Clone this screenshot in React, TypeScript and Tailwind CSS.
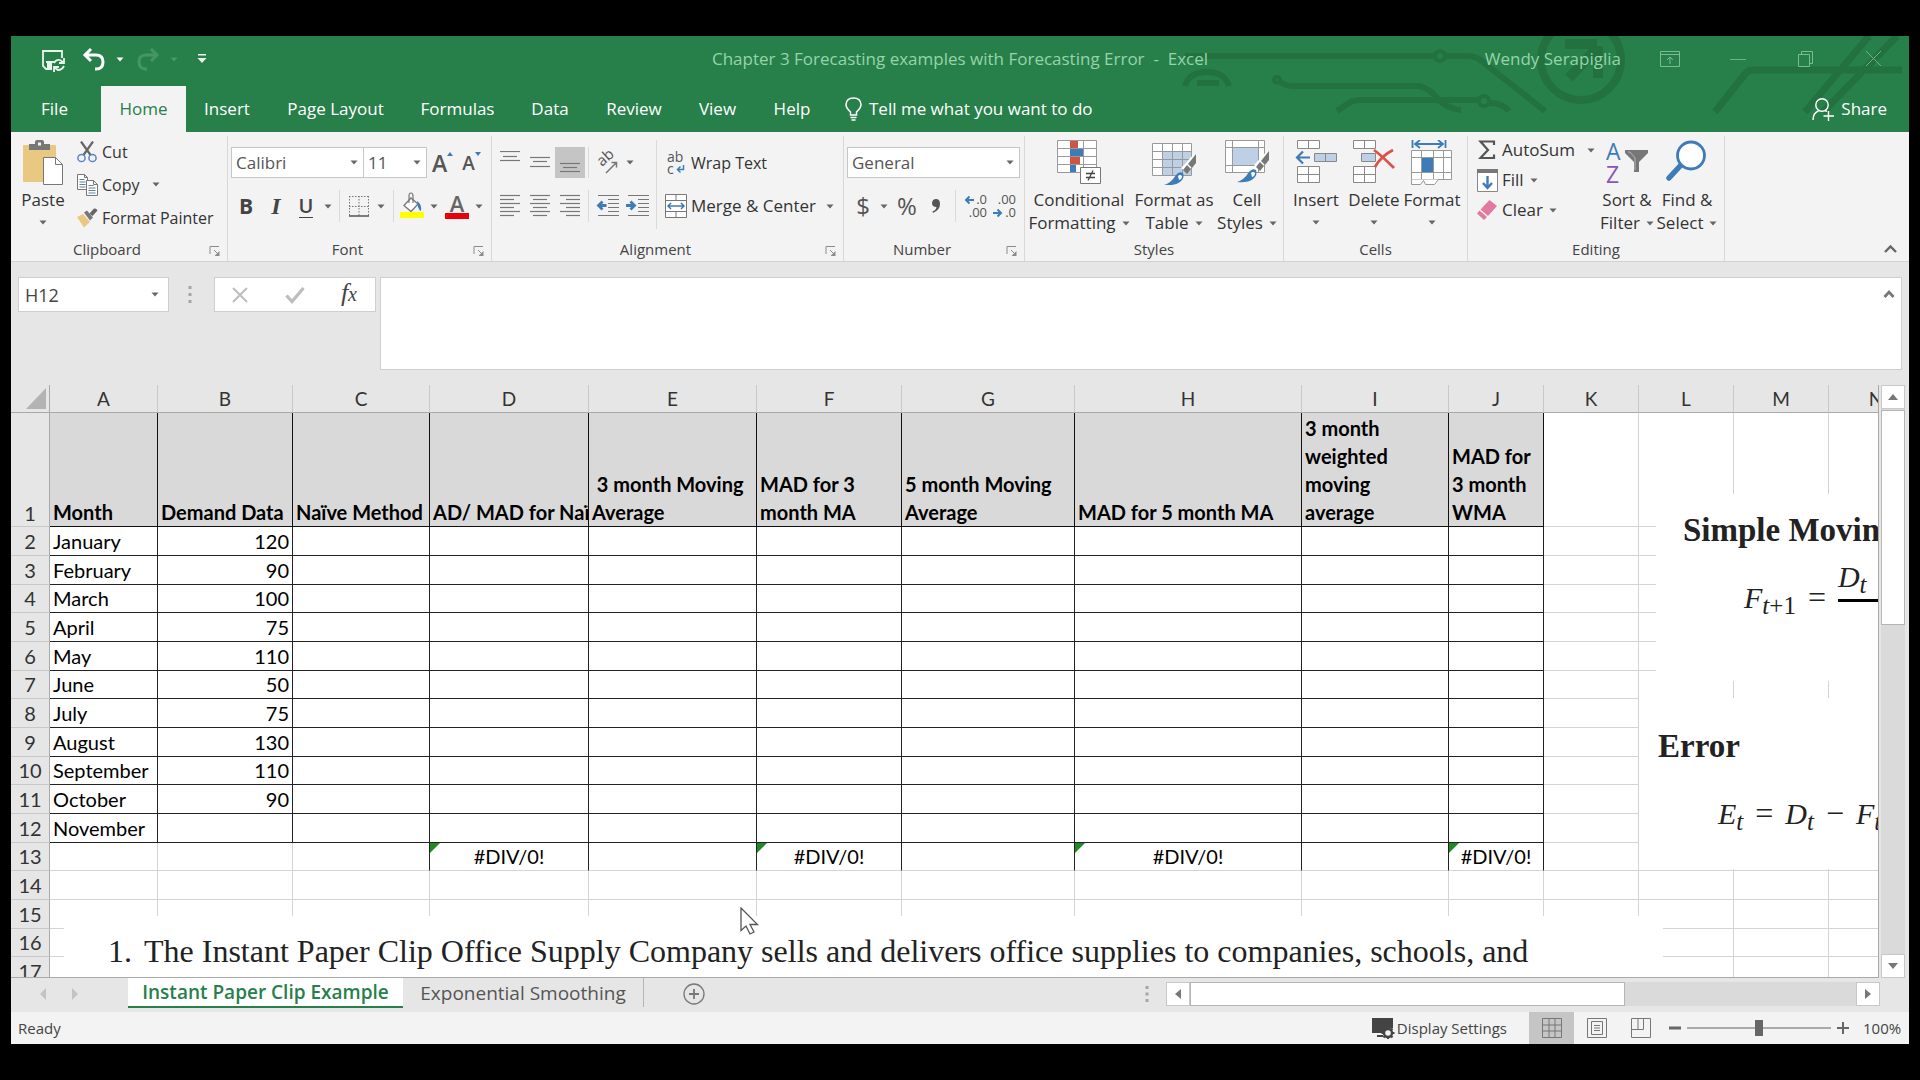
import type { ReactNode } from "react";

const UI = "font-['Open_Sans','Noto_Sans',sans-serif]";
const CELL = "font-['Lato','Open_Sans',sans-serif]";
const MATH = "font-['Liberation_Serif',serif]";

/* ---------- small pieces ---------- */

function Caret({ className = "text-[#666]" }: { className?: string }) {
  return (
    <svg className={`inline-block h-[5px] w-2 shrink-0 ${className}`} viewBox="0 0 8 5" aria-hidden="true">
      <path d="M0.5 0.5h7L4 4.5z" fill="currentColor" />
    </svg>
  );
}

function Launcher() {
  return (
    <button type="button" aria-label="More options" className="absolute right-1.5 top-1.5">
      <svg className="h-3 w-3" viewBox="0 0 12 12" fill="none" stroke="#8a8a8a" aria-hidden="true">
        <path d="M1 9V1.5h9M5 5l4 4" />
        <path d="M10.5 6v5H5.5z" fill="#8a8a8a" stroke="none" />
      </svg>
    </button>
  );
}

function Group({
  label,
  width,
  launcher,
  children,
}: {
  label: string;
  width: string;
  launcher?: boolean;
  children: ReactNode;
}) {
  return (
    <section className={`flex shrink-0 flex-col ${width}`} aria-label={label}>
      <div className="flex">
        <div className="flex h-[107px] min-w-0 flex-1">{children}</div>
        <div className="mt-1 w-px bg-[#d8d8d8]" />
      </div>
      <div
        className={`relative flex h-[22px] items-start justify-center border-r border-[#d8d8d8] text-[15px] leading-5 text-[#444] ${
          launcher ? "pr-6" : ""
        }`}
      >
        {label}
        {launcher && <Launcher />}
      </div>
    </section>
  );
}

function BigButton({
  icon,
  lines,
  width,
}: {
  icon: ReactNode;
  lines: [string, string];
  width: string;
}) {
  return (
    <button type="button" className={`flex shrink-0 flex-col items-center pt-2 ${width}`}>
      <span className="flex h-12 items-start justify-center">{icon}</span>
      <span className="whitespace-nowrap text-[17px] leading-[23px]">{lines[0]}</span>
      <span className={`flex items-center whitespace-nowrap text-[17px] leading-6 ${lines[1] ? "gap-1.5" : ""}`}>
        {lines[1]}
        <span className="flex h-[22px] items-center">
          <Caret />
        </span>
      </span>
    </button>
  );
}

function RowButton({
  icon,
  label,
  caret,
  height = "h-[33px]",
  gap = "gap-1.5",
  size = "text-[17px]",
}: {
  icon: ReactNode;
  label: string;
  caret?: boolean;
  height?: string;
  gap?: string;
  size?: string;
}) {
  return (
    <button type="button" className={`flex items-center gap-1 ${height}`}>
      <span className="flex w-[22px] shrink-0 items-center justify-center">{icon}</span>
      <span className={`flex items-center whitespace-nowrap leading-6 ${size} ${gap}`}>
        {label}
        {caret && <Caret />}
      </span>
    </button>
  );
}

function Tool({
  width,
  label,
  children,
  className = "",
}: {
  width: string;
  label: string;
  children: ReactNode;
  className?: string;
}) {
  return (
    <button
      type="button"
      aria-label={label}
      className={`flex h-full shrink-0 items-center justify-center ${width} ${className}`}
    >
      {children}
    </button>
  );
}

function Divider({ width }: { width: string }) {
  return (
    <span className={`flex h-full shrink-0 justify-center ${width}`}>
      <span className="h-full w-px bg-[#dadada]" />
    </span>
  );
}

/* ---------- icons ---------- */

const PasteIcon = () => (
  <svg className="h-[45px] w-[42px]" viewBox="0 0 42 45" aria-hidden="true">
    <rect x="1" y="5" width="33" height="37" rx="1" fill="#e9c882" />
    <path d="M7 4h6V2q0-2 2-2h5q2 0 2 2v2h6v6H7z" fill="#777" />
    <rect x="16" y="2.5" width="3" height="3" fill="#f3f3f3" />
    <path d="M21.500 17.500h12l7 7v20h-19z" fill="#fff" stroke="#777" />
    <path d="M33.500 17.500v7h7" fill="none" stroke="#777" />
  </svg>
);
const CutIcon = () => (
  <svg className="h-[22px] w-5" viewBox="0 0 20 22" fill="none" aria-hidden="true">
    <path d="M4 0.500 13.500 14M16 0.500 6.500 14" stroke="#666" strokeWidth="2.200" />
    <circle cx="4.500" cy="17" r="3.600" stroke="#5b84c4" strokeWidth="1.500" />
    <circle cx="15.500" cy="17" r="3.600" stroke="#5b84c4" strokeWidth="1.500" />
  </svg>
);
const CopyIcon = () => (
  <svg className="h-[22px] w-[21px]" viewBox="0 0 21 22" fill="#fff" stroke="#777" aria-hidden="true">
    <path d="M.5.5h7l3 3v12H.5zM7.500.5v3h3" />
    <path d="M2.500 5.500h5M2.500 8h6M2.500 10.500h6M2.500 13h6" stroke="#5b7f9c" />
    <path d="M9.500 6.500h7l4 4v11h-11zM16.500 6.500v4h4" />
    <path d="M11.500 11.500h5M11.500 14h7M11.500 16.500h7M11.500 19h7" stroke="#5b7f9c" />
  </svg>
);
const PainterIcon = () => (
  <svg className="h-5 w-[22px]" viewBox="0 0 22 20" aria-hidden="true">
    <path d="M1 9 7 6l7 8-6 5.500z" fill="#e9c882" />
    <path d="m8 4.500 3-2 6 7-3 3z" fill="#777" />
    <path d="M13.500 5.500 18 .5q2.500-.5 3.500 2L16.500 8z" fill="#666" />
  </svg>
);
const AlignIcon = ({ rows }: { rows: Array<[number, number, number]> }) => (
  <svg className="h-6 w-5" viewBox="0 0 20 24" stroke="#777" strokeWidth="1.200" aria-hidden="true">
    {rows.map(([x1, x2, y]) => (
      <path key={y} d={`M${x1} ${y}.5H${x2}`} />
    ))}
  </svg>
);
const IndentIcon = ({ out }: { out?: boolean }) => (
  <svg className="h-6 w-6" viewBox="0 0 24 24" fill="none" stroke="#777" strokeWidth="1.200" aria-hidden="true">
    <path d="M2 1.500h21M12 5.500h11M12 9.500h11M12 13.500h11M12 17.500h11M2 21.500h21" />
    {out ? (
      <path d="M10.500 11.500H3M6.500 7.500l-4 4 4 4" stroke="#3d7cb8" strokeWidth="2.800" />
    ) : (
      <path d="M0 11.500h8M4.500 7.500l4 4-4 4" stroke="#3d7cb8" strokeWidth="2.800" />
    )}
  </svg>
);
const OrientationIcon = () => (
  <svg className="h-5 w-5 overflow-visible" viewBox="0 0 20 20" fill="none" aria-hidden="true">
    <text x="0" y="0" transform="translate(4 14) rotate(-42)" fontSize="15" fill="#555" fontFamily="Open Sans">
      ab
    </text>
    <path d="M8 20 18 10M13.500 9.500H18.500v5" stroke="#777" strokeWidth="1.500" />
  </svg>
);
const WrapIcon = () => (
  <span className="relative block h-6 w-[18px] text-left text-[14px] text-[#555]" aria-hidden="true">
    <span className="block leading-[11px]">ab</span>
    <span className="block leading-[13px]">c</span>
    <svg className="absolute bottom-0 right-0 h-[11px] w-[9px]" viewBox="0 0 9 11" fill="none">
      <path d="M7.500 1v4.500H1.500M4.500 2.500l-3 3 3 3" stroke="#3d7cb8" strokeWidth="1.500" />
    </svg>
  </span>
);
const MergeIcon = () => (
  <svg className="h-6 w-[22px]" viewBox="0 0 22 24" fill="#fff" stroke="#777" aria-hidden="true">
    <path d="M.5.5h21v23H.5zM.5 6.500h21M.5 17.500h21M11 .5v6M11 17.500v6" />
    <path d="M3 12h16M6 9l-3 3 3 3M16 9l3 3-3 3" fill="none" stroke="#3d7cb8" strokeWidth="1.500" />
  </svg>
);
const BordersIcon = () => (
  <svg className="h-[22px] w-[22px]" viewBox="0 0 22 22" fill="none" stroke="#777" aria-hidden="true">
    <path d="M1 1.500h20M1.500 1v20M20.500 1v20M11 1v20M1 11.500h20" strokeDasharray="1.500 1.500" />
    <path d="M1 21h20" strokeWidth="1.500" stroke="#555" />
  </svg>
);
const FillColorIcon = () => (
  <svg className="h-7 w-6" viewBox="0 0 24 28" fill="none" aria-hidden="true">
    <path d="M11 6 4 13.500l7 6L18 12z" fill="#fff" stroke="#777" strokeWidth="1.300" />
    <path d="M9 11V4q0-3 2-3t2 3v7" stroke="#777" strokeWidth="1.200" />
    <path d="M17 9q5 3 4 10-2-1-3-4z" fill="#3d7cb8" />
    <rect x="0" y="20" width="24" height="6" fill="#ff0" />
  </svg>
);
const DecimalIcon = ({ less }: { less?: boolean }) => (
  <span className="relative block h-[26px] w-6 text-right text-[13px] text-[#555]" aria-hidden="true">
    <span className="block leading-[13px]">{less ? ".00" : ".0"}</span>
    <span className="block leading-[13px]">{less ? ".0" : ".00"}</span>
    <svg className="absolute inset-0 h-[26px] w-6" viewBox="0 0 24 26" fill="none" stroke="#3d7cb8" strokeWidth="2">
      {less ? (
        <path d="M1 20h8M5.500 16.500 9 20l-3.500 3.500" />
      ) : (
        <path d="M3 7h8M6.500 3.500 3 7l3.500 3.500" />
      )}
    </svg>
  </span>
);
const ConditionalIcon = () => (
  <svg className="h-11 w-11" viewBox="0 0 44 44" aria-hidden="true">
    <path d="M.5.500h39v32H.5zM.5 8.500h39M.5 16.500h39M.5 24.500h39M13.500.500v32M26.500.500v32" fill="#fff" stroke="#999" />
    <rect x="13" y="1" width="8" height="7" fill="#cf5443" />
    <rect x="13" y="9" width="13" height="7" fill="#3d7cb8" />
    <rect x="13" y="17" width="10" height="7" fill="#cf5443" />
    <rect x="13" y="25" width="6" height="7" fill="#3d7cb8" />
    <path d="M23.500 27.500h20v16h-20z" fill="#fff" stroke="#777" />
    <path d="M29 33.500h9M29 37.500h9M36 30.500l-5 10" fill="none" stroke="#444" strokeWidth="1.300" />
  </svg>
);
const Brush = () => (
  <>
    <path d="M43 10 44 19 35 30 29 25z" fill="#fff" />
    <path d="M44 11v9l-4 5-4-4z" fill="#777" />
    <path d="m35 22 4 4-4 5-4-4z" fill="#777" />
    <path d="M24 32q3-4 7-2 2 5-3 9-5 4-16 3 7-2 12-10z" fill="#3d7cb8" />
    <path d="M26 33q2-2 4 0 0 3-3 4z" fill="#fff" />
  </>
);
const FormatTableIcon = () => (
  <svg className="mt-[3px] h-[42px] w-[44px]" viewBox="0 0 44 42" aria-hidden="true">
    <path d="M.5.500h39v32H.5z" fill="#fff" />
    <rect x="11" y="8" width="29" height="24" fill="#bdd0e6" />
    <path d="M.5.500h39v32H.5zM.5 8.500h39M.5 16.500h39M.5 24.500h39M10.500.500v32M20.500.500v32M30.500.500v32" fill="none" stroke="#999" />
    <Brush />
  </svg>
);
const CellStylesIcon = () => (
  <svg className="h-[43px] w-[44px]" viewBox="0 0 44 43" aria-hidden="true">
    <path d="M.5.500h39v32H.5zM.5 7.500h39M.5 25.500h39M7.500.500v32M33.500.500v32" fill="#fff" stroke="#999" />
    <rect x="8" y="8" width="25" height="17" fill="#bdd0e6" />
    <Brush />
  </svg>
);
const InsertIcon = () => (
  <svg className="h-11 w-[42px]" viewBox="0 0 42 44" fill="#fff" stroke="#888" aria-hidden="true">
    <path d="M2.500.500h22v8h-22zM13.500.500v8M2.500 26.500h22v16h-22zM13.500 26.500v16M2.500 34.500h22" />
    <path d="M19.500 13.500h22v8h-22zM30.500 13.500v8" fill="#bdd0e6" />
    <path d="M15 17.500H2M8 11.500l-6 6 6 6" fill="none" stroke="#3d7cb8" strokeWidth="2.200" />
  </svg>
);
const DeleteIcon = () => (
  <svg className="h-11 w-[42px]" viewBox="0 0 42 44" fill="#fff" stroke="#888" aria-hidden="true">
    <path d="M.5.500h22v8h-22zM11.500.500v8M.5 26.500h22v16h-22zM11.500 26.500v16M.5 34.500h22" />
    <path d="M8.500 13.500h14v8h-14z" fill="#bdd0e6" />
    <path d="M21 10q8 6 20 18M40 10Q28 16 22 27" fill="none" stroke="#d9534a" strokeWidth="2.800" />
  </svg>
);
const FormatIcon = () => (
  <svg className="h-[46px] w-[42px]" viewBox="0 0 42 46" fill="#fff" stroke="#999" aria-hidden="true">
    <path d="M1.500 0v8M34.500 0v8M4 4h28M9 0 4 4l5 4M27 0l5 4-5 4" fill="none" stroke="#3d7cb8" strokeWidth="1.800" />
    <path d="M.5 10.500h40v29H.5zM.5 17.500h40M.5 32.500h40M10.500 10.500v29M22.500 10.500v29M32.500 10.500v29" />
    <rect x="11" y="18" width="11" height="14" fill="#3d7cb8" stroke="none" />
    <path d="M.5 39.500v5h9l3-4 2 4h9l4-5" />
  </svg>
);
const FillIcon = () => (
  <svg className="h-[23px] w-[21px]" viewBox="0 0 21 23" aria-hidden="true">
    <path d="M.5.500h20v22H.5z" fill="#fff" stroke="#888" />
    <rect x="0" y="0" width="21" height="4" fill="#777" />
    <path d="M10.500 7v12M6 14l4.500 5 4.500-5" fill="none" stroke="#3d7cb8" strokeWidth="2.400" />
  </svg>
);
const EraserIcon = () => (
  <svg className="h-5 w-5" viewBox="0 0 20 20" aria-hidden="true">
    <path d="M12.500 0 20 6 11 16 3.500 9.500z" fill="#e27a9f" />
    <path d="m2.500 10.500 7.500 6.500-3 3L0 13.500z" fill="#e27a9f" />
  </svg>
);
const SigmaIcon = () => (
  <svg className="h-5 w-[18px]" viewBox="0 0 18 20" fill="none" stroke="#555" strokeWidth="2.200" aria-hidden="true">
    <path d="M16 5V1.500H2.500L10 10l-7.500 8H16V14.500" />
  </svg>
);
const SortIcon = () => (
  <span className="relative block h-[46px] w-[42px] text-left text-[23px] leading-[23px]" aria-hidden="true">
    <span className="block text-[#3d7cb8]">A</span>
    <span className="block text-[#8a55b8]">Z</span>
    <svg className="absolute right-0 top-2.5 h-[23px] w-[23px]" viewBox="0 0 23 23">
      <path d="M0 0h23v3l-9 9v10H9V12L0 3z" fill="#777" />
      <path d="M3 2h2l5 6v12" fill="none" stroke="#b5b5b5" />
    </svg>
  </span>
);
const FindIcon = () => (
  <svg className="h-[42px] w-[42px]" viewBox="0 0 42 42" aria-hidden="true">
    <path d="M15 25 3 38" stroke="#3d7cb8" strokeWidth="5.500" strokeLinecap="round" />
    <circle cx="25" cy="15.500" r="13.500" fill="#fff" stroke="#3d7cb8" strokeWidth="2.800" />
  </svg>
);

/* ---------- title bar, tabs ---------- */

const CircuitPattern = () => (
  <svg
    className="pointer-events-none absolute right-0 top-0 h-[78px] w-[744px]"
    viewBox="0 0 744 78"
    fill="none"
    stroke="#22713f"
    strokeWidth="6"
    aria-hidden="true"
  >
    <path d="M20 20h250M280 20h22q10 0 16 6l62 49M116 46q4 4 12 4h126q10 2 18 12 8 10 24 12M172 75l12-8q4-3 12-3h117M324 67q14 0 20 8" />
    <circle cx="275" cy="20" r="5" strokeWidth="4" />
    <circle cx="112" cy="44" r="3" strokeWidth="4" />
    <circle cx="319" cy="65" r="5" strokeWidth="4" />
    <circle cx="416" cy="24" r="40" strokeWidth="8" />
    <path d="M400 8h32M433 10v32M430 14l-26 28" strokeWidth="10" />
    <path d="M20 50q4-14 22-14t22 14" />
    <path d="M32 47h22" />
    <path d="M550 76l30-38q3-4 9-4h148M658 76l74-76M640 76l64-76" strokeWidth="7" />
  </svg>
);

const TABS: Array<{ name: string; width: string }> = [
  { name: "File", width: "w-[90px] pr-[3px]" },
  { name: "Home", width: "w-[85px]" },
  { name: "Insert", width: "w-[82px]" },
  { name: "Page Layout", width: "w-[135px]" },
  { name: "Formulas", width: "w-[109px]" },
  { name: "Data", width: "w-[76px]" },
  { name: "Review", width: "w-[92px]" },
  { name: "View", width: "w-[75px]" },
  { name: "Help", width: "w-[74px]" },
];

function Header() {
  return (
    <header className="relative h-24 shrink-0 overflow-hidden bg-[#27804a] text-white">
      <CircuitPattern />
      <div className="relative mb-1 flex h-[46px] items-center pl-[31px]">
        <button type="button" aria-label="Save" className="mt-1 w-6">
          <svg className="h-6 w-6" viewBox="0 0 24 24" fill="none" stroke="#e8f5ec" strokeWidth="1.800" aria-hidden="true">
            <path d="M10 20H4l-3-3V2h19v7M4 13h8" />
            <path d="M5 14h5v6H5z" fill="#e8f5ec" stroke="none" />
            <path d="M12 14q2-4 6-3l3 2M22 9v5h-5M22 17q-2 4-6 4l-3-2M12 23v-5h5" />
          </svg>
        </button>
        <button type="button" aria-label="Undo" className="ml-4 w-6">
          <svg className="h-6 w-6" viewBox="0 0 24 24" fill="none" stroke="#fff" strokeWidth="3" aria-hidden="true">
            <path d="M9 2 3 8l6 6M3.500 8H14q7 0 7 7t-7 7h-1" />
          </svg>
        </button>
        <Caret className="ml-2.5 text-white" />
        <button type="button" aria-label="Redo" className="ml-3 w-6 opacity-25">
          <svg className="h-6 w-6" viewBox="0 0 24 24" fill="none" stroke="#9fd9b4" strokeWidth="3" aria-hidden="true">
            <path d="m15 2 6 6-6 6M20.500 8H10q-7 0-7 7t7 7h1" />
          </svg>
        </button>
        <Caret className="ml-2.5 text-[#4b9868]" />
        <button type="button" aria-label="Customize toolbar" className="ml-[19px]">
          <svg className="h-2.5 w-2.5" viewBox="0 0 10 10" fill="#e8f5ec" aria-hidden="true">
            <path d="M1 0h8v1.500H1zM.5 4h9L5 9z" />
          </svg>
        </button>
        <h1 className="absolute inset-x-0 whitespace-pre text-center text-[17px] leading-6 text-[#97d3ab]">
          Chapter 3 Forecasting examples with Forecasting Error  -  Excel
        </h1>
        <div className="ml-auto flex items-center text-[#97d3ab]">
          <span className="mr-[39px] text-[17px] leading-6">Wendy Serapiglia</span>
          <div className="flex items-center gap-12 pr-[25px]">
            <svg className="h-5 w-5" viewBox="0 0 20 20" fill="none" stroke="#7bbb92" aria-hidden="true">
              <path d="M.5 2.500h19v15H.5zM.5 5.500h19M10 15V8M7 11l3-3 3 3" />
            </svg>
            <svg className="h-5 w-5" viewBox="0 0 20 20" stroke="#6fb287" aria-hidden="true">
              <path d="M2 10.500h16" />
            </svg>
            <svg className="h-5 w-5" viewBox="0 0 20 20" fill="none" stroke="#7bbb92" aria-hidden="true">
              <path d="M2.500 5.500h11v12h-11zM5.500 5.500v-3h11v12h-3" />
            </svg>
            <svg className="h-5 w-5" viewBox="0 0 20 20" stroke="#6fb287" aria-hidden="true">
              <path d="m2 2 15 15M17 2 2 17" />
            </svg>
          </div>
        </div>
      </div>
      <nav className="relative flex h-[46px] items-stretch text-[17px]" aria-label="Ribbon tabs">
        {TABS.map((t) => (
          <button
            key={t.name}
            type="button"
            className={`shrink-0 whitespace-nowrap ${t.width} ${
              t.name === "Home" ? "bg-[#f3f3f3] text-[#27804a]" : ""
            }`}
          >
            {t.name}
          </button>
        ))}
        <button type="button" className="ml-4 flex items-center gap-[7px] whitespace-nowrap">
          <svg className="h-6 w-[17px]" viewBox="0 0 17 24" fill="none" stroke="#fff" strokeWidth="1.500" aria-hidden="true">
            <path d="M5.500 18v-3Q1 11 1 7.500 1.500 1 8.500 1T16 7.500q0 3.500-4.500 7.500v3zM5.500 20.500h6M6.500 23h4" />
          </svg>
          Tell me what you want to do
        </button>
        <button type="button" className="ml-auto mr-[22px] flex items-center gap-[7px]">
          <svg className="h-[23px] w-[22px]" viewBox="0 0 22 23" fill="none" stroke="#fff" strokeWidth="1.400" aria-hidden="true">
            <circle cx="10" cy="7" r="6.200" />
            <path d="M1 22q0-7 6-9.500M13 12.500l2 1M16.500 13v10M11.500 18h10.500" />
          </svg>
          Share
        </button>
      </nav>
    </header>
  );
}

/* ---------- ribbon ---------- */

function Ribbon() {
  return (
    <div className="relative flex h-[130px] shrink-0 border-b border-[#d2d2d2] bg-[#f3f3f3] text-[#333]">
      <Group label="Clipboard" width="w-[217px]" launcher>
        <BigButton icon={<PasteIcon />} lines={["Paste", ""]} width="w-[64px]" />
        <div className="flex flex-col items-start pl-px pt-[3px]">
          <RowButton icon={<CutIcon />} label="Cut" size="text-[16px]" />
          <RowButton icon={<CopyIcon />} label="Copy" caret gap="gap-3" size="text-[16px]" />
          <RowButton icon={<PainterIcon />} label="Format Painter" size="text-[16px]" />
        </div>
      </Group>

      <Group label="Font" width="w-[264px]" launcher>
        <div className="flex flex-col gap-3 pl-[3px] pt-[15px]">
          <div className="flex h-[31px]">
            <label className="relative flex w-[133px] items-center">
              <select aria-label="Font name" className="h-full w-full appearance-none border border-[#c6c6c6] bg-white pl-1 text-[17px] leading-6 text-[#555]">
                <option>Calibri</option>
              </select>
              <Caret className="pointer-events-none absolute right-1.5 text-[#666]" />
            </label>
            <label className="relative flex w-[63px] items-center">
              <select aria-label="Font size" className="h-full w-full appearance-none border border-l-0 border-[#c6c6c6] bg-white pl-1 text-[17px] leading-6 text-[#555]">
                <option>11</option>
              </select>
              <Caret className="pointer-events-none absolute right-1.5 text-[#666]" />
            </label>
            <Tool width="w-[31px]" label="Increase font size">
              <span className="flex items-start text-[23px] font-semibold leading-8 text-[#555]">
                A
                <svg className="mt-1 h-1.5 w-1.5" viewBox="0 0 6 6" aria-hidden="true">
                  <path d="m0 5 3-4 3 4z" fill="#3d7cb8" />
                </svg>
              </span>
            </Tool>
            <Tool width="w-[27px]" label="Decrease font size">
              <span className="flex items-start text-[19px] font-semibold leading-8 text-[#555]">
                A
                <svg className="mt-1 h-1.5 w-1.5" viewBox="0 0 6 6" aria-hidden="true">
                  <path d="m0 1 3 4 3-4z" fill="#3d7cb8" />
                </svg>
              </span>
            </Tool>
          </div>
          <div className="flex h-8 items-center text-[#444]">
            <Tool width="w-[30px]" label="Bold"><b className="text-[21px] leading-8">B</b></Tool>
            <Tool width="w-[30px]" label="Italic">
              <i className="font-['Liberation_Serif',serif] text-[24px] font-bold leading-8">I</i>
            </Tool>
            <Tool width="w-[30px]" label="Underline">
              <span className="border-b border-[#444] text-[20px] font-semibold leading-[22px]">U</span>
            </Tool>
            <Tool width="w-[14px]" label="Underline styles"><Caret /></Tool>
            <Divider width="w-[9px]" />
            <Tool width="w-[29px]" label="Borders"><BordersIcon /></Tool>
            <Tool width="w-4" label="Border styles"><Caret /></Tool>
            <Divider width="w-[9px]" />
            <Tool width="w-7" label="Fill color"><FillColorIcon /></Tool>
            <Tool width="w-4" label="Fill colors"><Caret /></Tool>
            <Tool width="w-[30px]" label="Font color">
              <span className="mb-0.5 block h-7 w-6 border-b-6 border-[#e8000b] text-center text-[22px] font-semibold leading-6 text-[#666]">A</span>
            </Tool>
            <Tool width="w-[14px]" label="Font colors"><Caret /></Tool>
          </div>
        </div>
      </Group>

      <Group label="Alignment" width="w-[352px]" launcher>
        <div className="flex w-[164px] flex-col gap-3 pl-[3px] pt-[15px]">
          <div className="flex h-[31px]">
            <Tool width="w-[30px]" label="Top align">
              <AlignIcon rows={[[0, 20, 0], [3, 17, 5], [0, 20, 9]]} />
            </Tool>
            <Tool width="w-[30px]" label="Middle align">
              <AlignIcon rows={[[0, 20, 6], [3, 17, 10], [0, 20, 15]]} />
            </Tool>
            <Tool width="w-[30px]" label="Bottom align" className="bg-[#c5c5c5]">
              <AlignIcon rows={[[0, 20, 12], [3, 17, 16], [0, 20, 20]]} />
            </Tool>
            <Divider width="w-[7px]" />
            <Tool width="w-8" label="Orientation"><OrientationIcon /></Tool>
            <Tool width="w-3" label="Orientation options"><Caret /></Tool>
          </div>
          <div className="flex h-8">
            <Tool width="w-[30px]" label="Align left">
              <AlignIcon rows={[[0, 20, 1], [0, 14, 5], [0, 20, 9], [0, 14, 13], [0, 20, 17], [0, 14, 21]]} />
            </Tool>
            <Tool width="w-[30px]" label="Align center">
              <AlignIcon rows={[[0, 20, 1], [3, 17, 5], [0, 20, 9], [3, 17, 13], [0, 20, 17], [3, 17, 21]]} />
            </Tool>
            <Tool width="w-[30px]" label="Align right">
              <AlignIcon rows={[[0, 20, 1], [6, 20, 5], [0, 20, 9], [6, 20, 13], [0, 20, 17], [6, 20, 21]]} />
            </Tool>
            <Divider width="w-[7px]" />
            <Tool width="w-8" label="Decrease indent"><IndentIcon out /></Tool>
            <Tool width="w-7" label="Increase indent"><IndentIcon /></Tool>
          </div>
        </div>
        <div className="mb-2.5 mt-2 w-px bg-[#dadada]" />
        <div className="flex flex-1 flex-col gap-3 pl-2 pt-[15px]">
          <RowButton icon={<WrapIcon />} label="Wrap Text" height="h-[31px]" size="text-[16px]" />
          <RowButton icon={<MergeIcon />} label="Merge & Center" height="h-8" caret gap="gap-2.5" />
        </div>
      </Group>

      <Group label="Number" width="w-[181px]" launcher>
        <div className="flex w-full flex-col gap-3 pl-[3px] pr-1 pt-[15px]">
          <label className="relative flex h-[31px] items-center">
            <select aria-label="Number format" className="h-full w-full appearance-none border border-[#c6c6c6] bg-white pl-1 text-[17px] leading-6 text-[#555]">
              <option>General</option>
            </select>
            <Caret className="pointer-events-none absolute right-1.5 text-[#666]" />
          </label>
          <div className="flex h-8 text-[#555]">
            <Tool width="w-8" label="Currency"><span className="text-[24px] leading-8">$</span></Tool>
            <Tool width="w-2.5" label="Currency options"><Caret /></Tool>
            <Tool width="w-9" label="Percent"><span className="text-[24px] leading-8">%</span></Tool>
            <Tool width="w-[22px]" label="Comma style">
              <svg className="h-4 w-2.5" viewBox="0 0 10 16" fill="#555" aria-hidden="true">
                <path d="M5 1q4 0 4 5 0 6-7 9l-.500-1.500Q5 12 5.500 9 1 9 1 5 1.500 1 5 1z" />
              </svg>
            </Tool>
            <Divider width="w-4" />
            <Tool width="w-6" label="Increase decimal"><DecimalIcon /></Tool>
            <Tool width="w-[34px]" label="Decrease decimal"><DecimalIcon less /></Tool>
          </div>
        </div>
      </Group>

      <Group label="Styles" width="w-[259px]">
        <BigButton icon={<ConditionalIcon />} lines={["Conditional", "Formatting"]} width="w-[108px]" />
        <BigButton icon={<FormatTableIcon />} lines={["Format as", "Table"]} width="w-[82px]" />
        <BigButton icon={<CellStylesIcon />} lines={["Cell", "Styles"]} width="w-[64px]" />
      </Group>

      <Group label="Cells" width="w-[184px]">
        <BigButton icon={<InsertIcon />} lines={["Insert", ""]} width="w-[64px]" />
        <BigButton icon={<DeleteIcon />} lines={["Delete", ""]} width="w-[52px]" />
        <BigButton icon={<FormatIcon />} lines={["Format", ""]} width="w-[64px]" />
      </Group>

      <Group label="Editing" width="w-[257px]">
        <div className="flex w-[129px] flex-col items-start pl-2 pt-[3px]">
          <RowButton icon={<SigmaIcon />} label="AutoSum" height="h-[30px]" caret gap="gap-3" />
          <RowButton icon={<FillIcon />} label="Fill" height="h-[30px]" caret />
          <RowButton icon={<EraserIcon />} label="Clear" height="h-[30px]" caret />
        </div>
        <BigButton icon={<SortIcon />} lines={["Sort &", "Filter"]} width="w-[60px]" />
        <BigButton icon={<FindIcon />} lines={["Find &", "Select"]} width="w-[60px]" />
      </Group>

      <button type="button" aria-label="Collapse ribbon" className="ml-auto mr-3 self-end pb-[7px]">
        <svg className="h-2.5 w-[13px]" viewBox="0 0 13 10" fill="none" stroke="#666" strokeWidth="2.400" aria-hidden="true">
          <path d="m1 8 5.500-5.500L12 8" />
        </svg>
      </button>
    </div>
  );
}

/* ---------- formula bar ---------- */

function FormulaBar() {
  return (
    <div className="flex h-[123px] shrink-0 items-start pl-[7px] pr-[7px] pt-[15px]">
      <label className="relative flex h-[35px] w-[151px] items-center">
        <input aria-label="Name box" defaultValue="H12" className="h-full w-full border border-[#cfcfcf] bg-white px-1.5 text-[18px] text-[#444]" />
        <Caret className="pointer-events-none absolute right-2.5 text-[#666]" />
      </label>
      <svg className="ml-[19px] mt-2 h-5 w-1" viewBox="0 0 4 20" fill="#a5a5a5" aria-hidden="true">
        <path d="M.5 1h3v3h-3zM.5 8h3v3h-3zM.5 15h3v3h-3z" />
      </svg>
      <div className="ml-[22px] flex h-[35px] w-[162px] items-center justify-between border border-[#cfcfcf] bg-white pl-4 pr-[18px]">
        <button type="button" aria-label="Cancel">
          <svg className="h-[18px] w-[18px]" viewBox="0 0 18 18" stroke="#bdbdbd" strokeWidth="2" aria-hidden="true">
            <path d="m2 2 14 14M16 2 2 16" />
          </svg>
        </button>
        <button type="button" aria-label="Enter">
          <svg className="h-[18px] w-5" viewBox="0 0 20 18" fill="none" stroke="#bdbdbd" strokeWidth="3.200" aria-hidden="true">
            <path d="m1.500 9.500 5.500 6L18.500 2" />
          </svg>
        </button>
        <button type="button" aria-label="Insert function" className="pb-0.5 font-['Liberation_Serif',serif] text-[26px] italic leading-8 text-[#444]">
          f<span className="text-[20px]">x</span>
        </button>
      </div>
      <div className="relative ml-1 flex flex-1">
        <textarea aria-label="Formula" className="h-[93px] w-full resize-none border border-[#cfcfcf] bg-white outline-none" />
        <svg className="absolute right-[7px] top-3 h-2.5 w-3" viewBox="0 0 12 10" fill="none" stroke="#777" strokeWidth="2.800" aria-hidden="true">
          <path d="m1.500 8 4.500-5L10.500 8" />
        </svg>
      </div>
    </div>
  );
}

/* ---------- sheet ---------- */

const COLUMNS: Array<{ id: string; width: string; head: string }> = [
  { id: "A", width: "w-[108px]", head: "Month" },
  { id: "B", width: "w-[135px]", head: "Demand Data" },
  { id: "C", width: "w-[137px]", head: "Naïve Method" },
  { id: "D", width: "w-[159px]", head: "AD/ MAD for Naïve" },
  { id: "E", width: "w-[168px]", head: " 3 month Moving\nAverage" },
  { id: "F", width: "w-[145px]", head: "MAD for 3\nmonth MA" },
  { id: "G", width: "w-[173px]", head: "5 month Moving\nAverage" },
  { id: "H", width: "w-[227px]", head: "MAD for 5 month MA" },
  { id: "I", width: "w-[147px]", head: "3 month\nweighted\nmoving\naverage" },
  { id: "J", width: "w-[95px]", head: "MAD for\n3 month\nWMA" },
  { id: "K", width: "w-[95px]", head: "" },
  { id: "L", width: "w-[95px]", head: "" },
  { id: "M", width: "w-[95px]", head: "" },
  { id: "N", width: "w-[95px]", head: "" },
];

const DATA: Array<[string, string]> = [
  ["January", "120"],
  ["February", "90"],
  ["March", "100"],
  ["April", "75"],
  ["May", "110"],
  ["June", "50"],
  ["July", "75"],
  ["August", "130"],
  ["September", "110"],
  ["October", "90"],
  ["November", ""],
];

const FILLED = "ABCDEFGHIJ";
const ERRORS = "DFHJ";
const rowHeight = (n: number) => (n % 3 === 1 ? "h-7" : "h-[29px]");
const ROW_HEAD = "border-b border-r border-b-[#c9c9c9] border-r-[#a9a9a9] bg-[#e6e6e6] font-normal text-[#333]";

function Sheet() {
  return (
    <table className={`w-[1920px] table-fixed border-separate border-spacing-0 text-[20px] leading-[28px] text-black ${CELL}`}>
      <colgroup>
        <col className="w-[39px]" />
        {COLUMNS.map((c) => (
          <col key={c.id} className={c.width} />
        ))}
        <col />
      </colgroup>
      <thead>
        <tr className="h-7 bg-[#e6e6e6] text-[#333]">
          <th className="border-b border-r border-[#a9a9a9] p-0">
            <svg className="ml-[15px] h-[22px] w-[21px]" viewBox="0 0 21 22" aria-hidden="true">
              <path d="M20 0v21H0z" fill="#b3b3b3" />
            </svg>
          </th>
          {COLUMNS.map((c) => (
            <th key={c.id} scope="col" className="border-b border-r border-b-[#a9a9a9] border-r-[#c9c9c9] p-0 text-[19px] font-normal leading-[27px]">
              {c.id}
            </th>
          ))}
        </tr>
      </thead>
      <tbody>
        <tr className="h-[114px]">
          <th scope="row" className={`p-0 align-bottom leading-[26px] ${ROW_HEAD}`}>1</th>
          {COLUMNS.map((c) => (
            <td
              key={c.id}
              className={`overflow-hidden whitespace-pre border-b border-r p-0 pl-[3px] align-bottom font-bold ${
                FILLED.includes(c.id) ? "border-[#111] bg-[#d9d9d9]" : "border-[#d4d4d4] bg-white"
              }`}
            >
              {c.head}
            </td>
          ))}
        </tr>
        {DATA.map(([month, demand], i) => (
          <tr key={month} className={rowHeight(i + 2)}>
            <th scope="row" className={`p-0 leading-[27px] ${ROW_HEAD}`}>{i + 2}</th>
            {COLUMNS.map((c) => (
              <td
                key={c.id}
                className={`border-b border-r px-[3px] py-0 leading-[27px] ${c.id === "B" ? "text-right" : ""} ${
                  FILLED.includes(c.id) ? "border-[#222] bg-white" : "border-[#d4d4d4] bg-white"
                }`}
              >
                {c.id === "A" ? month : c.id === "B" ? demand : ""}
              </td>
            ))}
          </tr>
        ))}
        <tr className={rowHeight(13)}>
          <th scope="row" className={`p-0 leading-[27px] ${ROW_HEAD}`}>13</th>
          {COLUMNS.map((c) => (
            <td
              key={c.id}
              className={`relative border-b border-r border-b-[#d4d4d4] bg-white p-0 text-center leading-[27px] ${
                "CDEFGHIJ".includes(c.id) ? "border-r-[#222]" : "border-r-[#d4d4d4]"
              }`}
            >
              {ERRORS.includes(c.id) && (
                <>
                  <svg className="absolute left-0 top-0 h-2.5 w-2.5" viewBox="0 0 10 10" aria-hidden="true">
                    <path d="M0 0h10L0 10z" fill="#1e8a24" />
                  </svg>
                  #DIV/0!
                </>
              )}
            </td>
          ))}
        </tr>
        {[14, 15, 16, 17].map((n) => (
          <tr key={n} className={rowHeight(n)}>
            <th scope="row" className={`p-0 leading-[27px] ${ROW_HEAD}`}>{n}</th>
            {COLUMNS.map((c) => (
              <td key={c.id} className="border-b border-r border-[#d4d4d4] bg-white p-0" />
            ))}
          </tr>
        ))}
      </tbody>
    </table>
  );
}

function Sub({ children }: { children: ReactNode }) {
  return <sub className="text-[25px]">{children}</sub>;
}

function Op({ children }: { children: ReactNode }) {
  return <span className="mx-3 text-[32px] not-italic leading-none">{children}</span>;
}

function FloatingNotes() {
  return (
    <div className={MATH}>
      <div className="absolute left-[53px] top-[531px] h-16 w-[1599px] whitespace-nowrap bg-white pl-11 pt-[17px] text-[32px] leading-9 text-[#222]">
        <span className="mr-3">1.</span>
        The Instant Paper Clip Office Supply Company sells and delivers office supplies to companies, schools, and
      </div>
      <div className="absolute left-[1645px] top-[109px] h-[187px] w-[300px] bg-white text-[#222]">
        <p className="whitespace-nowrap pl-[27px] pt-[18px] text-[33px] font-bold leading-9">Simple Moving Average</p>
        <div className="flex items-start whitespace-nowrap pl-[88px] pt-3 text-[30px] italic">
          <span className="pt-5 leading-9">
            F<Sub>t<span className="not-italic">+1</span></Sub><Op>=</Op>
          </span>
          <span className="border-b-[3px] border-black pb-1.5 leading-8">
            D<Sub>t</Sub><Op>+</Op>D<Sub>t-1</Sub>
          </span>
        </div>
      </div>
      <div className="absolute left-[1628px] top-[313px] h-[171px] w-[300px] bg-white text-[#222]">
        <p className="pl-[19px] pt-[30px] text-[33px] font-bold leading-9">Error</p>
        <p className="whitespace-nowrap pl-[79px] pt-8 text-[30px] italic leading-9">
          E<Sub>t</Sub><Op>=</Op>D<Sub>t</Sub><Op>−</Op>F<Sub>t</Sub>
        </p>
      </div>
    </div>
  );
}

function ScrollButton({ path, label, className }: { path: string; label: string; className: string }) {
  return (
    <button type="button" aria-label={label} className={`flex shrink-0 items-center justify-center border border-[#c8c8c8] bg-white ${className}`}>
      <svg className="h-3 w-3" viewBox="0 0 12 12" fill="#777" aria-hidden="true">
        <path d={path} />
      </svg>
    </button>
  );
}

function SheetArea() {
  return (
    <div className="flex min-h-0 flex-1">
      <div className="relative min-w-0 flex-1 overflow-hidden border-b border-r border-[#a9a9a9]">
        <Sheet />
        <FloatingNotes />
        <svg className="pointer-events-none absolute left-[729px] top-[522px] h-7 w-5" viewBox="0 0 20 28" fill="#fff" stroke="#555" strokeWidth="1.300" aria-hidden="true">
          <path d="M1 1v22.500l5-4.500 4 8 4-2-4-7.500h7.500z" />
        </svg>
      </div>
      <div className="ml-[2px] mr-1 flex w-6 flex-col bg-[#dadada]">
        <ScrollButton path="M1 9h10L6 3z" label="Scroll up" className="h-6" />
        <div className="mt-px h-[215px] border border-[#b5b5b5] bg-white" />
        <div className="flex-1" />
        <ScrollButton path="M1 3h10L6 9z" label="Scroll down" className="h-6" />
      </div>
    </div>
  );
}

/* ---------- bottom bars ---------- */

function SheetTabs() {
  return (
    <div className="flex h-[34px] shrink-0 items-start">
      <div className="flex h-[31px] w-[117px] items-center gap-6 pl-7">
        <svg className="h-3 w-2" viewBox="0 0 8 12" fill="#c3c3c3" aria-hidden="true"><path d="M7 0v12L1 6z" /></svg>
        <svg className="h-3 w-2" viewBox="0 0 8 12" fill="#c3c3c3" aria-hidden="true"><path d="M1 0v12l6-6z" /></svg>
      </div>
      <button type="button" className="-mt-px h-[31px] w-[275px] whitespace-nowrap border-b-2 border-[#27804a] bg-white text-[19px] font-semibold leading-[30px] text-[#27804a]">
        Instant Paper Clip Example
      </button>
      <button type="button" className="h-[29px] w-[241px] whitespace-nowrap border-r border-[#b5b5b5] text-[19px] leading-7 text-[#555]">
        Exponential Smoothing
      </button>
      <button type="button" aria-label="New sheet" className="ml-[39px] mt-[5px]">
        <svg className="h-[22px] w-[22px]" viewBox="0 0 22 22" fill="none" stroke="#777" aria-hidden="true">
          <circle cx="11" cy="11" r="10" strokeWidth="1.300" />
          <path d="M11 6v10M6 11h10" strokeWidth="1.800" />
        </svg>
      </button>
      <svg className="ml-auto mr-[17px] mt-1.5 h-5 w-1" viewBox="0 0 4 20" fill="#a5a5a5" aria-hidden="true">
        <path d="M.5 2h3v3h-3zM.5 8.500h3v3h-3zM.5 15h3v3h-3z" />
      </svg>
      <div className="mr-[29px] mt-1 flex h-6 w-[714px] bg-[#dadada]">
        <ScrollButton path="M9 1v10L3 6z" label="Scroll left" className="w-6" />
        <div className="w-[435px] border border-[#b5b5b5] bg-white" />
        <div className="flex-1" />
        <ScrollButton path="M3 1v10l6-5z" label="Scroll right" className="w-6" />
      </div>
    </div>
  );
}

function StatusBar() {
  return (
    <footer className="flex h-8 shrink-0 items-center bg-[#f3f3f3] pl-[7px] text-[15px] text-[#444]">
      <span>Ready</span>
      <button type="button" className="ml-auto mr-[22px] flex items-center gap-0.5">
        <svg className="h-[22px] w-[23px]" viewBox="0 0 23 22" aria-hidden="true">
          <path d="M0 1h21v10l-8 2-2 3H0zM5 18h6v2H5z" fill="#444" />
          <circle cx="16" cy="16" r="4" fill="#f3f3f3" stroke="#444" strokeWidth="2.400" />
          <path d="M16 9.500v2M16 20.500v2M9.500 16h2M20.500 16h2M11.500 11.500l1.500 1.500M19 19l1.500 1.500M20.500 11.500 19 13M13 19l-1.500 1.500" stroke="#444" strokeWidth="2" />
        </svg>
        Display Settings
      </button>
      <button type="button" aria-label="Normal view" className="flex h-8 w-[45px] items-center justify-center bg-[#c5c5c5]">
        <svg className="h-5 w-5" viewBox="0 0 20 20" fill="none" stroke="#777" aria-hidden="true">
          <path d="M.5.500h19v19H.5zM7 .500v19M13 .500v19M.5 7h19M.5 13h19" />
        </svg>
      </button>
      <button type="button" aria-label="Page layout view" className="flex h-8 w-[45px] items-center justify-center">
        <svg className="h-5 w-5" viewBox="0 0 20 20" fill="none" stroke="#777" aria-hidden="true">
          <path d="M.5.500h19v19H.5zM4.500 3.500h11v13h-11zM7 7.500h6M7 10h6M7 12.500h6" />
        </svg>
      </button>
      <button type="button" aria-label="Page break view" className="flex h-8 w-[44px] items-center justify-center">
        <svg className="h-5 w-5" viewBox="0 0 20 20" fill="none" stroke="#777" aria-hidden="true">
          <path d="M.5.500h19v19H.5zM.5 11.500h12V.5M7 .500v11" />
        </svg>
      </button>
      <button type="button" aria-label="Zoom out" className="ml-1.5 flex w-3">
        <svg className="h-3 w-3" viewBox="0 0 12 12" stroke="#666" strokeWidth="3" aria-hidden="true"><path d="M0 6h12" /></svg>
      </button>
      <input
        type="range"
        aria-label="Zoom"
        min={0}
        max={200}
        defaultValue={100}
        className="mx-1.5 h-4 w-[144px] appearance-none bg-[linear-gradient(#aaa,#aaa)] bg-[length:100%_2px] bg-center bg-no-repeat [&::-webkit-slider-thumb]:h-4 [&::-webkit-slider-thumb]:w-2 [&::-webkit-slider-thumb]:appearance-none [&::-webkit-slider-thumb]:bg-[#666]"
      />
      <button type="button" aria-label="Zoom in" className="flex w-3">
        <svg className="h-3 w-3" viewBox="0 0 12 12" stroke="#666" strokeWidth="2" aria-hidden="true"><path d="M0 6h12M6 0v12" /></svg>
      </button>
      <span className="ml-3.5 mr-2 w-[38px] whitespace-nowrap">100%</span>
    </footer>
  );
}

export default function App() {
  return (
    <div className={`flex h-screen flex-col overflow-hidden bg-black px-[11px] py-9 ${UI}`}>
      <div className="flex min-h-0 flex-1 flex-col overflow-hidden bg-[#e6e6e6]">
        <Header />
        <Ribbon />
        <FormulaBar />
        <SheetArea />
        <SheetTabs />
        <StatusBar />
      </div>
    </div>
  );
}
